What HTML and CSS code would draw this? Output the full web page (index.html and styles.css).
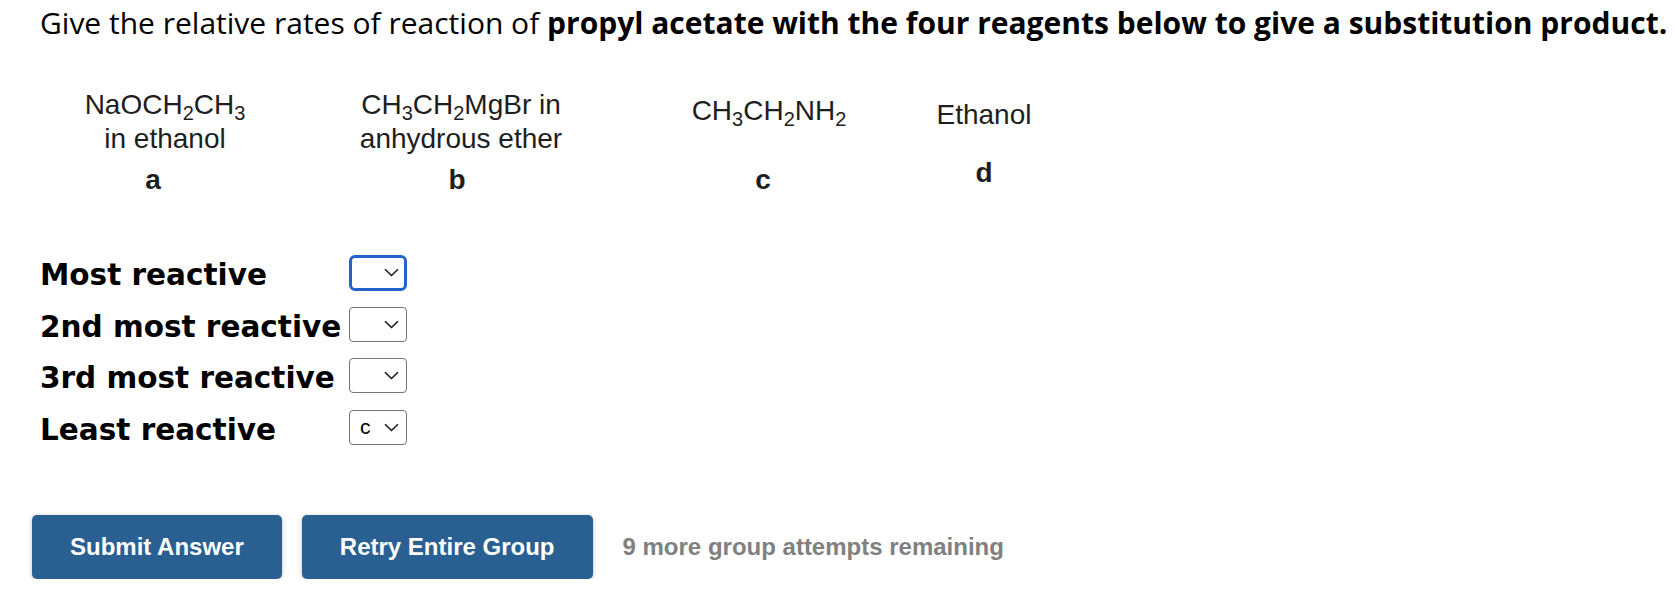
FILE: index.html
```html
<!DOCTYPE html>
<html lang="en">
<head>
    <meta charset="UTF-8">
    <title>Relative rates of reaction</title>
    <link rel="stylesheet" href="styles.css">
</head>
<body>
    <div class="question">
        <p class="prompt">Give the relative rates of reaction of <strong>propyl acetate with the four reagents below to give a substitution product.</strong></p>

        <div class="reagents">
            <div class="reagent reagent-a">
                <div class="name">NaOCH<sub>2</sub>CH<sub>3</sub></div>
                <div class="name">in ethanol</div>
                <div class="letter">a</div>
            </div>
            <div class="reagent reagent-b">
                <div class="name">CH<sub>3</sub>CH<sub>2</sub>MgBr in</div>
                <div class="name">anhydrous ether</div>
                <div class="letter">b</div>
            </div>
            <div class="reagent reagent-c">
                <div class="name">CH<sub>3</sub>CH<sub>2</sub>NH<sub>2</sub></div>
                <div class="letter">c</div>
            </div>
            <div class="reagent reagent-d">
                <div class="name">Ethanol</div>
                <div class="letter">d</div>
            </div>
        </div>

        <div class="ranking">
            <div class="rank-label">Most reactive</div>
            <div class="select-box focused">
                <span class="value"></span>
                <svg class="chevron" width="15" height="9" viewBox="0 0 15 9"><path d="M1 1.2l6.5 6.3 6.5-6.3" fill="none" stroke="#1a1a1a" stroke-width="1.6"/></svg>
            </div>
            <div class="rank-label">2nd most reactive</div>
            <div class="select-box">
                <span class="value"></span>
                <svg class="chevron" width="15" height="9" viewBox="0 0 15 9"><path d="M1 1.2l6.5 6.3 6.5-6.3" fill="none" stroke="#1a1a1a" stroke-width="1.6"/></svg>
            </div>
            <div class="rank-label">3rd most reactive</div>
            <div class="select-box">
                <span class="value"></span>
                <svg class="chevron" width="15" height="9" viewBox="0 0 15 9"><path d="M1 1.2l6.5 6.3 6.5-6.3" fill="none" stroke="#1a1a1a" stroke-width="1.6"/></svg>
            </div>
            <div class="rank-label">Least reactive</div>
            <div class="select-box">
                <span class="value">c</span>
                <svg class="chevron" width="15" height="9" viewBox="0 0 15 9"><path d="M1 1.2l6.5 6.3 6.5-6.3" fill="none" stroke="#1a1a1a" stroke-width="1.6"/></svg>
            </div>
        </div>

        <div class="actions">
            <button class="btn">Submit Answer</button>
            <button class="btn">Retry Entire Group</button>
            <span class="attempts">9 more group attempts remaining</span>
        </div>
    </div>
</body>
</html>
```

FILE: styles.css
```css
body {
    margin: 0;
    background: #ffffff;
    color: #000;
}
.question {
    padding-left: 40px;
}
.prompt {
    margin: 2px 0 0;
    font-family: 'Open Sans', sans-serif;
    font-size: 30px;
    white-space: nowrap;
}
.prompt strong {
    font-weight: 700;
}

/* reagent table, drawn like the original picture */
.reagents {
    display: grid;
    grid-template-columns: 200px 392px 224px 206px;
    margin: 45px 0 0 25px;
    font-family: 'Liberation Sans', Arial, sans-serif;
    font-size: 28px;
    line-height: 34px;
    color: #1e1e1e;
}
.reagent {
    text-align: center;
}
.reagent sub {
    font-size: 20px;
    line-height: 0;
    vertical-align: -6px;
}
.letter {
    font-weight: bold;
    margin-top: 7px;
}
.reagent-a .letter {
    padding-right: 24px;
}
.reagent-b .letter {
    padding-right: 8px;
}
.reagent-c {
    padding-top: 6px;
}
.reagent-c .letter {
    margin-top: 35px;
    padding-right: 12px;
}
.reagent-d {
    padding-top: 10px;
}
.reagent-d .letter {
    margin-top: 24px;
}

/* ranking dropdowns */
.ranking {
    display: grid;
    grid-template-columns: 309px 60px;
    grid-auto-rows: 51.5px;
    align-items: center;
    margin-top: 50px;
}
.rank-label {
    font-family: 'DejaVu Sans', Verdana, sans-serif;
    font-weight: bold;
    font-size: 29.5px;
    line-height: 46.5px;
    padding-top: 5px;
    white-space: nowrap;
}
.select-box {
    box-sizing: border-box;
    width: 58px;
    height: 35px;
    border: 1.5px solid #767676;
    border-radius: 4px;
    display: flex;
    align-items: center;
    padding: 0 7px 0 10px;
    font-family: 'Liberation Sans', Arial, sans-serif;
    font-size: 21px;
}
.select-box.focused {
    height: 36px;
    border: 3px solid #2563cc;
    border-radius: 6px;
    padding: 0 5px 0 8px;
}
.chevron {
    display: block;
    margin-left: auto;
}

/* buttons */
.actions {
    display: flex;
    align-items: center;
    gap: 20px;
    margin: 62px 0 0 -8px;
}
.btn {
    height: 64px;
    padding: 0 38px;
    border: none;
    border-radius: 5px;
    background: #2a5f91;
    color: #fff;
    font-family: 'Liberation Sans', Arial, sans-serif;
    font-weight: bold;
    font-size: 24px;
    box-shadow: 0 1px 4px rgba(0, 0, 0, 0.25);
}
.attempts {
    margin-left: 10px;
    color: #808080;
    font-family: 'Liberation Sans', Arial, sans-serif;
    font-weight: bold;
    font-size: 24px;
}
```
